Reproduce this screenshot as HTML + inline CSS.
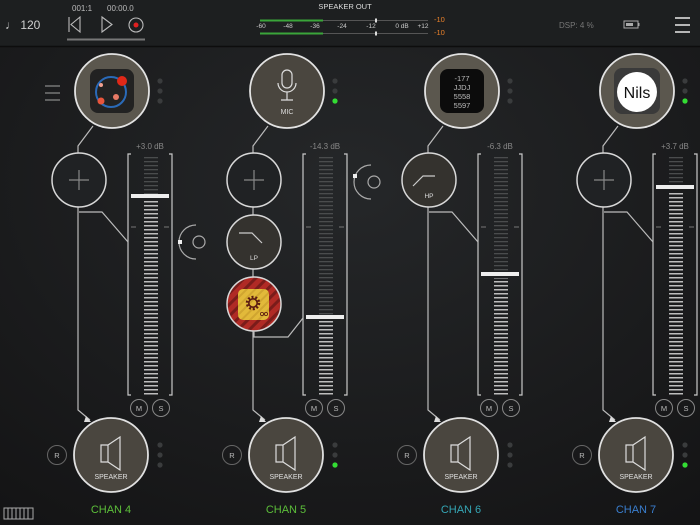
<!DOCTYPE html>
<html><head><meta charset="utf-8"><style>
html,body{margin:0;padding:0;width:700px;height:525px;overflow:hidden;background:#181a1b}
svg{display:block}
text{font-family:"Liberation Sans",sans-serif}
</style></head><body>
<svg width="700" height="525" viewBox="0 0 700 525" xmlns="http://www.w3.org/2000/svg">
<defs>
<radialGradient id="bg" cx="0.5" cy="0.35" r="0.8">
<stop offset="0" stop-color="#252729"/><stop offset="1" stop-color="#141415"/>
</radialGradient>
<pattern id="tk" x="0" y="0" width="14" height="4" patternUnits="userSpaceOnUse">
<rect x="0" y="1" width="14" height="1.3" fill="#4a4c4d"/></pattern>
<pattern id="tkb" x="0" y="0" width="14" height="4" patternUnits="userSpaceOnUse">
<rect x="0" y="1" width="14" height="1.5" fill="#bdbdbd"/></pattern>
<pattern id="str" width="8" height="8" patternUnits="userSpaceOnUse" patternTransform="rotate(45)">
<rect width="8" height="8" fill="#b02a25"/><rect width="3" height="8" fill="#7a1c1a"/></pattern>
<pattern id="ystr" width="6" height="6" patternUnits="userSpaceOnUse" patternTransform="rotate(45)">
<rect width="6" height="6" fill="#e2b93a"/><rect width="2" height="6" fill="#d0a530"/></pattern>
<g id="dots"><circle cx="0" cy="0" r="2.6" fill="#3a3c3d"/><circle cx="0" cy="10" r="2.6" fill="#3a3c3d"/><circle cx="0" cy="20" r="2.6" fill="#3a3c3d"/></g>
<g id="plus"><circle r="27" fill="#202224" stroke="#d8d8d8" stroke-width="1.5"/><path d="M-10 0H10M0 -10V10" stroke="#888" stroke-width="1.2"/></g>
<g id="spk">
<circle r="37" fill="#4a463f" stroke="#e0e0e0" stroke-width="1.8"/>
<path d="M-10 -10h7v17h-7z M-3 -10l12 -8v33l-12 -8" fill="none" stroke="#ddd" stroke-width="1.2"/>
<text x="0" y="24" font-size="7" fill="#e0e0e0" text-anchor="middle">SPEAKER</text>
</g>
<path id="diag" d="M79 212H102L128 242" fill="none" stroke="#bbb" stroke-width="1.2"/>
</defs>
<rect width="700" height="525" fill="url(#bg)"/>
<!-- top bar -->
<rect width="700" height="46" fill="#1d1f20"/>
<line x1="0" y1="46.5" x2="700" y2="46.5" stroke="#0d0d0d" stroke-width="1.5"/>
<text x="5" y="29" font-size="12" fill="#cfcfcf">♩ 120</text>
<text x="72" y="11" font-size="8" fill="#bbb" font-family="Liberation Mono">001:1</text>
<text x="107" y="11" font-size="8" fill="#bbb" font-family="Liberation Mono">00:00.0</text>
<path d="M69 17v15M80 17l-9 7.5 9 7.5z" fill="none" stroke="#bbb" stroke-width="1.1"/>
<path d="M102 17l10 7.5-10 7.5z" fill="none" stroke="#bbb" stroke-width="1.1"/>
<circle cx="136" cy="25" r="7" fill="none" stroke="#bbb" stroke-width="1.1"/><circle cx="136" cy="25" r="2.5" fill="#e02020"/>
<rect x="67" y="38.5" width="78" height="2" fill="#777"/>
<text x="345" y="9" font-size="7.5" fill="#ddd" text-anchor="middle">SPEAKER OUT</text>
<rect x="260" y="19.5" width="63" height="2" fill="#3aa53a"/><rect x="323" y="20" width="105" height="1" fill="#555"/>
<rect x="260" y="32.5" width="63" height="2" fill="#3aa53a"/><rect x="323" y="33" width="105" height="1" fill="#555"/>
<rect x="375" y="18.5" width="2" height="4" fill="#ddd"/><rect x="375" y="31.5" width="2" height="4" fill="#ddd"/>
<g font-size="6.5" fill="#ccc" text-anchor="middle">
<text x="261" y="28">-60</text><text x="288" y="28">-48</text><text x="315" y="28">-36</text><text x="342" y="28">-24</text><text x="371" y="28">-12</text><text x="402" y="28">0 dB</text><text x="423" y="28">+12</text></g>
<text x="434" y="22" font-size="7.5" fill="#e8802a">-10</text><text x="434" y="35" font-size="7.5" fill="#e8802a">-10</text>
<text x="559" y="28" font-size="8" fill="#777">DSP:  4 %</text>
<rect x="624" y="21" width="14" height="7" fill="none" stroke="#aaa" stroke-width="1"/><rect x="626" y="23" width="7" height="3" fill="#aaa"/><rect x="638" y="23" width="1.5" height="3" fill="#aaa"/>
<path d="M675 18h15M675 25h15M675 32h15" stroke="#ccc" stroke-width="1.8"/>
<path d="M45 86h15M45 93h15M45 100h15" stroke="#888" stroke-width="1.2"/>

<g id="ch">
<path d="M93 126L78 146V410L90 420" fill="none" stroke="#bbb" stroke-width="1.2"/>
<path d="M86 416l5 6-7 0z" fill="#ddd"/>
<path d="M131 154h-3v241h3M169 154h3v241h-3" fill="none" stroke="#c8c8c8" stroke-width="1.2"/>
<path d="M131 227h5M164 227h5" stroke="#777"/>
<circle cx="139" cy="408" r="8.5" fill="none" stroke="#888"/><text x="139" y="411" font-size="7.5" fill="#bbb" text-anchor="middle">M</text>
<circle cx="161" cy="408" r="8.5" fill="none" stroke="#888"/><text x="161" y="411" font-size="7.5" fill="#bbb" text-anchor="middle">S</text>
<circle cx="57" cy="455" r="9.5" fill="none" stroke="#666"/><text x="57" y="458" font-size="7.5" fill="#bbb" text-anchor="middle">R</text>
<use href="#spk" x="111" y="455"/>
<use href="#dots" x="160" y="445"/>
<use href="#dots" x="160" y="81"/>
</g>
<use href="#ch" x="175"/><use href="#ch" x="350"/><use href="#ch" x="525"/>
<use href="#diag"/><use href="#diag" x="350"/><use href="#diag" x="525"/>
<circle cx="335" cy="465" r="2.6" fill="#33dd33"/><circle cx="685" cy="465" r="2.6" fill="#33dd33"/>
<circle cx="335" cy="101" r="2.6" fill="#33dd33"/><circle cx="685" cy="101" r="2.6" fill="#33dd33"/>

<g>
<rect x="144" y="155" width="14" height="40" fill="url(#tk)"/><rect x="144" y="200" width="14" height="195" fill="url(#tkb)"/>
<rect x="131" y="194" width="38" height="4" fill="#eee"/>
<text x="150" y="149" font-size="8" fill="#888" text-anchor="middle">+3.0 dB</text>
</g>
<g>
<rect x="319" y="155" width="14" height="160" fill="url(#tk)"/><rect x="319" y="321" width="14" height="74" fill="url(#tkb)"/>
<rect x="306" y="315" width="38" height="4" fill="#eee"/>
<text x="325" y="149" font-size="8" fill="#888" text-anchor="middle">-14.3 dB</text>
</g>
<g>
<rect x="494" y="155" width="14" height="117" fill="url(#tk)"/><rect x="494" y="278" width="14" height="117" fill="url(#tkb)"/>
<rect x="481" y="272" width="38" height="4" fill="#eee"/>
<text x="500" y="149" font-size="8" fill="#888" text-anchor="middle">-6.3 dB</text>
</g>
<g>
<rect x="669" y="155" width="14" height="30" fill="url(#tk)"/><rect x="669" y="191" width="14" height="204" fill="url(#tkb)"/>
<rect x="656" y="185" width="38" height="4" fill="#eee"/>
<text x="675" y="149" font-size="8" fill="#888" text-anchor="middle">+3.7 dB</text>
</g>

<path d="M196 225A17 17 0 0 0 196 259" fill="none" stroke="#aaa" stroke-width="1.2"/><circle cx="199" cy="242" r="6" fill="none" stroke="#aaa" stroke-width="1.2"/><rect x="178" y="240" width="4" height="4" fill="#eee"/>
<path d="M371 165A17 17 0 0 0 371 199" fill="none" stroke="#aaa" stroke-width="1.2"/><circle cx="374" cy="182" r="6" fill="none" stroke="#aaa" stroke-width="1.2"/><rect x="353" y="174" width="4" height="4" fill="#eee"/>

<circle cx="112" cy="91" r="37" fill="#5b574e" stroke="#e2e2e2" stroke-width="1.8"/>
<rect x="90" y="69" width="44" height="44" rx="8" fill="#222"/>
<circle cx="111" cy="92" r="15" fill="none" stroke="#2a6ab8" stroke-width="2"/>
<circle cx="122" cy="81" r="5" fill="#e02818"/><circle cx="101" cy="101" r="3.5" fill="#e8553c"/><circle cx="116" cy="97" r="3" fill="#e87a66"/><circle cx="101" cy="85" r="2" fill="#f0a090"/>
<use href="#plus" x="79" y="180"/>

<circle cx="287" cy="91" r="37" fill="#4a463f" stroke="#e2e2e2" stroke-width="1.8"/>
<rect x="282" y="70" width="10" height="18" rx="5" fill="none" stroke="#ddd" stroke-width="1.2"/>
<path d="M278 83a9 9 0 0 0 18 0M287 92v8M281 100h12" fill="none" stroke="#ddd" stroke-width="1.2"/>
<text x="287" y="114" font-size="7" fill="#ddd" text-anchor="middle">MIC</text>
<use href="#plus" x="254" y="180"/>
<circle cx="254" cy="242" r="27" fill="#34322e" stroke="#d8d8d8" stroke-width="1.5"/>
<path d="M239 233h13l10 10" fill="none" stroke="#ccc" stroke-width="1.2"/>
<text x="254" y="260" font-size="6.5" fill="#ddd" text-anchor="middle">LP</text>
<circle cx="254" cy="304" r="27" fill="url(#str)" stroke="#d8d8d8" stroke-width="1.5"/>
<rect x="238" y="289" width="31" height="31" rx="5" fill="url(#ystr)"/>
<circle cx="253" cy="303" r="6" fill="none" stroke="#5a1a12" stroke-width="2.5" stroke-dasharray="2 1.8"/>
<circle cx="253" cy="303" r="4.2" fill="none" stroke="#5a1a12" stroke-width="1.6"/>
<circle cx="262" cy="314" r="1.6" fill="none" stroke="#5a1a12" stroke-width="0.8"/><circle cx="266" cy="314" r="1.6" fill="none" stroke="#5a1a12" stroke-width="0.8"/>
<path d="M254 331v6H288L303 318" fill="none" stroke="#bbb" stroke-width="1.2"/>

<circle cx="462" cy="91" r="37" fill="#5b574e" stroke="#e2e2e2" stroke-width="1.8"/>
<rect x="440" y="69" width="44" height="44" rx="8" fill="#0c0c0c"/>
<g font-family="Liberation Mono" font-size="7.5" fill="#bbb" text-anchor="middle"><text x="462" y="81">-177</text><text x="462" y="90">JJDJ</text><text x="462" y="99">5558</text><text x="462" y="108">5597</text></g>
<circle cx="429" cy="180" r="27" fill="#34322e" stroke="#d8d8d8" stroke-width="1.5"/>
<path d="M413 186l10 -10h12" fill="none" stroke="#ccc" stroke-width="1.2"/>
<text x="429" y="198" font-size="6.5" fill="#ddd" text-anchor="middle">HP</text>

<circle cx="637" cy="91" r="37" fill="#5b574e" stroke="#e2e2e2" stroke-width="1.8"/>
<rect x="614" y="68" width="46" height="46" rx="8" fill="#3a3a3a"/>
<circle cx="637" cy="92" r="20" fill="#fff"/>
<text x="637" y="98" font-size="16" fill="#111" text-anchor="middle">Nils</text>
<use href="#plus" x="604" y="180"/>

<text x="111" y="513" font-size="11" fill="#5cbf3a" text-anchor="middle">CHAN 4</text>
<text x="286" y="513" font-size="11" fill="#5cbf3a" text-anchor="middle">CHAN 5</text>
<text x="461" y="513" font-size="11" fill="#35a6b5" text-anchor="middle">CHAN 6</text>
<text x="636" y="513" font-size="11" fill="#3a7fd0" text-anchor="middle">CHAN 7</text>
<rect x="4" y="508" width="29" height="11" fill="none" stroke="#aaa"/>
<path d="M8 508v11M12 508v11M16 508v11M20 508v11M24 508v11M28 508v11" stroke="#aaa" stroke-width="1"/>
</svg>
</body></html>
